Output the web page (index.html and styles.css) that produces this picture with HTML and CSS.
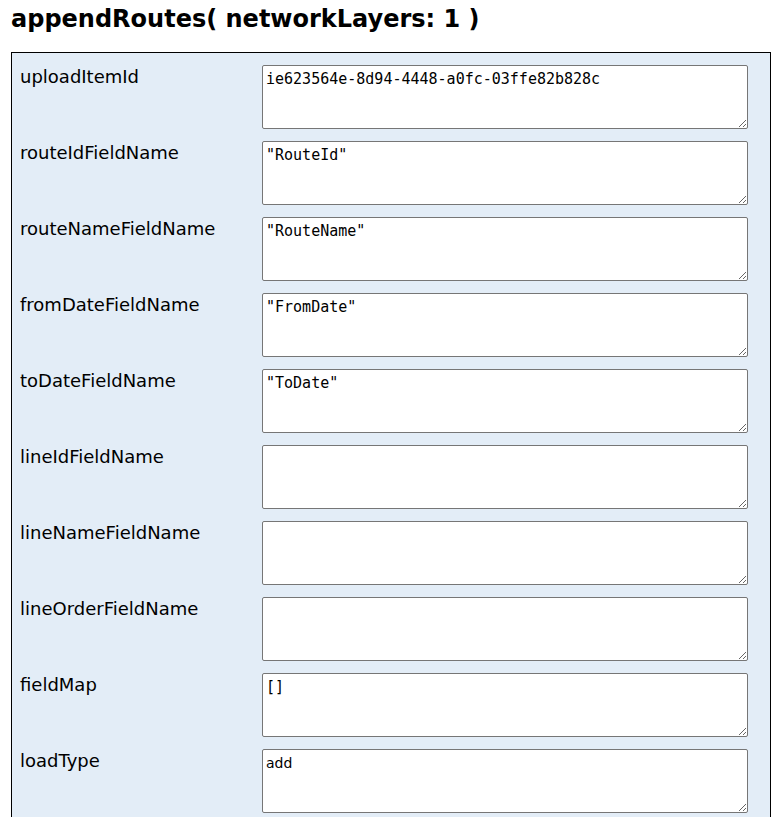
FILE: index.html
```html
<!DOCTYPE html>
<html>
<head>
<meta charset="utf-8">
<link rel="stylesheet" href="styles.css">
</head>
<body>
<div class="page">
  <h1 class="title">appendRoutes( networkLayers: 1 )</h1>
  <div class="panel">
    <div class="form">
      <label class="label">uploadItemId</label>
      <textarea class="field">ie623564e-8d94-4448-a0fc-03ffe82b828c</textarea>
      <label class="label">routeIdFieldName</label>
      <textarea class="field">"RouteId"</textarea>
      <label class="label">routeNameFieldName</label>
      <textarea class="field">"RouteName"</textarea>
      <label class="label">fromDateFieldName</label>
      <textarea class="field">"FromDate"</textarea>
      <label class="label">toDateFieldName</label>
      <textarea class="field">"ToDate"</textarea>
      <label class="label">lineIdFieldName</label>
      <textarea class="field"></textarea>
      <label class="label">lineNameFieldName</label>
      <textarea class="field"></textarea>
      <label class="label">lineOrderFieldName</label>
      <textarea class="field"></textarea>
      <label class="label">fieldMap</label>
      <textarea class="field">[]</textarea>
      <label class="label">loadType</label>
      <textarea class="field field-sans">add</textarea>
    </div>
  </div>
</div>
</body>
</html>
```
FILE: styles.css
```css
html, body {
  margin: 0;
  padding: 0;
  background: #ffffff;
}
.page {
  padding: 0 0 0 11px;
  font-family: "DejaVu Sans", Verdana, sans-serif;
  color: #000;
}
.title {
  margin: 0;
  padding: 5px 0 0 0;
  height: 52px;
  box-sizing: border-box;
  font-size: 24px;
  font-weight: bold;
  line-height: 28px;
}
.panel {
  width: 760px;
  box-sizing: border-box;
  border: 1px solid #000;
  background: #e3edf7;
  padding: 12px 0 12px 8px;
}
.form {
  display: grid;
  grid-template-columns: 242px 486px;
  row-gap: 12px;
}
.label {
  font-size: 18px;
  line-height: 22px;
  padding-top: 1px;
}
.field {
  box-sizing: border-box;
  width: 486px;
  height: 64px;
  margin: 0;
  padding: 4px 3px 2px 3px;
  border: 1px solid #767676;
  border-radius: 2px;
  background: #fff;
  font-family: "DejaVu Sans Mono", monospace;
  font-size: 15px;
  line-height: 18px;
  color: #000;
}
.field-sans {
  font-family: "DejaVu Sans", Verdana, sans-serif;
  font-size: 14px;
}
```
